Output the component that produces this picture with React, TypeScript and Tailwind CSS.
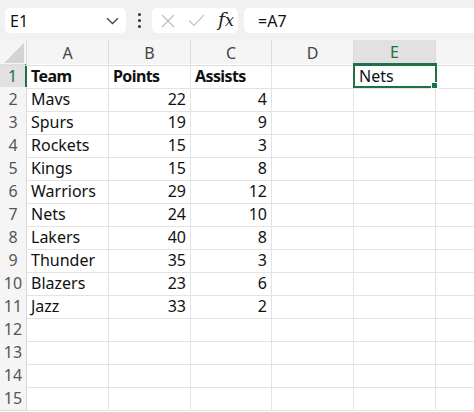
const rows: [string, string, string][] = [
  ["Team", "Points", "Assists"],
  ["Mavs", "22", "4"],
  ["Spurs", "19", "9"],
  ["Rockets", "15", "3"],
  ["Kings", "15", "8"],
  ["Warriors", "29", "12"],
  ["Nets", "24", "10"],
  ["Lakers", "40", "8"],
  ["Thunder", "35", "3"],
  ["Blazers", "23", "6"],
  ["Jazz", "33", "2"],
];

const cols = ["A", "B", "C", "D", "E"];
const gridCols = "grid grid-cols-[27px_82px_82px_81px_82px_82px_1fr]";

export default function App() {
  const body = Array.from({ length: 15 }, (_, i) => rows[i] ?? ["", "", ""]);

  return (
    <div className="w-[474px] h-[412px] overflow-hidden bg-white text-[#111] font-['Noto_Sans',sans-serif]">
      {/* formula bar */}
      <div className="h-[40px] bg-[#f1f1f1] flex items-start pt-[8px] pl-[5px]">
        <div className="w-[121px] h-[25px] bg-white rounded-[5px] flex items-center pl-[5px] pr-[7px] justify-between">
          <span className="text-[16px] leading-none">E1</span>
          <svg width="13" height="8" viewBox="0 0 13 8" fill="none" stroke="#444" strokeWidth="1.3">
            <path d="M1 1.2 L6.5 6.5 L12 1.2" />
          </svg>
        </div>
        <div className="w-[26px] h-[25px] flex flex-col items-center justify-center gap-[3px]">
          <span className="w-[3px] h-[3px] rounded-full bg-[#333]" />
          <span className="w-[3px] h-[3px] rounded-full bg-[#333]" />
          <span className="w-[3px] h-[3px] rounded-full bg-[#333]" />
        </div>
        <div className="w-[86px] h-[25px] bg-white rounded-[5px] flex items-center pl-[9px] gap-[13px]">
          <svg width="14" height="14" viewBox="0 0 14 14" stroke="#bdbdbd" strokeWidth="1.2">
            <path d="M1 1 L13 13 M13 1 L1 13" />
          </svg>
          <svg width="17" height="13" viewBox="0 0 17 13" fill="none" stroke="#c4c4c4" strokeWidth="1.2">
            <path d="M1 6.5 L6 11.5 L16 1" />
          </svg>
          <span className="text-[19px] leading-none italic font-['DejaVu_Serif',serif] text-[#222] -mt-[3px]">
            f<span className="text-[16px]">x</span>
          </span>
        </div>
        <div className="ml-[6px] flex-1 h-[25px] bg-white rounded-l-[5px] flex items-center pl-[14px]">
          <span className="text-[16px] leading-none">=A7</span>
        </div>
      </div>

      {/* column headers */}
      <div className={`${gridCols} h-[24px] bg-[#f5f5f5] text-[#444] text-[16px]`}>
        <div className="relative border-r border-b border-[#dcdcdc]">
          <svg className="absolute right-[2px] bottom-[2px]" width="20" height="20" viewBox="0 0 20 20">
            <path d="M20 0 L20 20 L0 20 Z" fill="#d4d4d4" />
          </svg>
        </div>
        {cols.map((c) => (
          <div
            key={c}
            className={
              c === "E"
                ? "flex items-center justify-center border-r border-b-2 border-[#dcdcdc] border-b-[#1e7145] bg-[#e1e1e1] text-[#1e7145]"
                : "flex items-center justify-center border-r border-b border-[#dcdcdc]"
            }
          >
            {c}
          </div>
        ))}
        <div className="border-b border-[#dcdcdc]" />
      </div>

      {/* body */}
      {body.map((r, i) => (
        <div key={i} className={`${gridCols} h-[23px] text-[16px]`}>
          <div
            className={
              i === 0
                ? "flex items-center justify-center bg-[#e1e1e1] text-[#1e7145] border-r-2 border-b border-[#1e7145] border-b-[#dcdcdc]"
                : "flex items-center justify-center bg-[#f5f5f5] text-[#555] border-r border-b border-[#dcdcdc]"
            }
          >
            {i + 1}
          </div>
          <div
            className={`flex items-center pl-[4px] border-r border-b border-[#e3e3e3] ${
              i === 0 ? "font-bold tracking-[-0.6px]" : ""
            }`}
          >
            {r[0]}
          </div>
          <div
            className={`flex items-center border-r border-b border-[#e3e3e3] ${
              i === 0 ? "font-bold tracking-[-0.6px] pl-[4px]" : "justify-end pr-[4px]"
            }`}
          >
            {r[1]}
          </div>
          <div
            className={`flex items-center border-r border-b border-[#e3e3e3] ${
              i === 0 ? "font-bold tracking-[-0.6px] pl-[4px] whitespace-nowrap" : "justify-end pr-[4px]"
            }`}
          >
            {r[2]}
          </div>
          <div className="border-r border-b border-[#e3e3e3]" />
          {i === 0 ? (
            <div className="relative border-r border-b border-[#e3e3e3]">
              <div className="absolute -left-[1px] -top-[1px] w-[84px] h-[25px] border-2 border-[#1e7145] flex items-center pl-[4px]">
                Nets
                <span className="absolute -right-[3px] -bottom-[3px] w-[5px] h-[5px] bg-[#1e7145] border border-white box-content" />
              </div>
            </div>
          ) : (
            <div className="border-r border-b border-[#e3e3e3]" />
          )}
          <div className="border-b border-[#e3e3e3]" />
        </div>
      ))}
    </div>
  );
}
